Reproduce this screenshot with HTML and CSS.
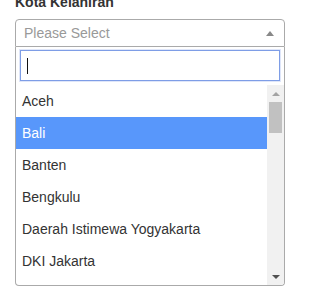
FILE: index.html
```html
<!DOCTYPE html>
<html>
<head>
<meta charset="utf-8">
<link rel="stylesheet" href="styles.css">
</head>
<body>
<div class="field">
  <label class="label">Kota Kelahiran</label>
  <div class="select">
    <span class="placeholder">Please Select</span>
    <span class="arrow"></span>
  </div>
  <div class="dropdown">
    <div class="search">
      <div class="search-input"><span class="caret"></span></div>
    </div>
    <div class="results">
      <ul class="options">
        <li class="option">Aceh</li>
        <li class="option active">Bali</li>
        <li class="option">Banten</li>
        <li class="option">Bengkulu</li>
        <li class="option">Daerah Istimewa Yogyakarta</li>
        <li class="option">DKI Jakarta</li>
      </ul>
      <div class="scrollbar">
        <div class="sb-btn"><span class="sb-up"></span></div>
        <div class="sb-thumb"></div>
        <div class="sb-track"></div>
        <div class="sb-btn"><span class="sb-down"></span></div>
      </div>
    </div>
  </div>
</div>
</body>
</html>
```
FILE: styles.css
```css
html, body {
  margin: 0;
  padding: 0;
  background: #fff;
}
body {
  font-family: "Liberation Sans", Arial, sans-serif;
  font-size: 14px;
  color: #333;
}
.field {
  margin: 0 0 0 15px;
  width: 270px;
}
.label {
  display: block;
  font-weight: bold;
  line-height: 20px;
  margin-top: -8px;
  margin-bottom: 7px;
}
.select {
  box-sizing: border-box;
  height: 28px;
  border: 1px solid #aaa;
  border-radius: 4px 4px 0 0;
  display: flex;
  align-items: center;
  justify-content: space-between;
  padding: 0 8px 0 8px;
  background: #fff;
}
.placeholder {
  color: #999;
  line-height: 26px;
  font-size: 14px;
}
.arrow {
  width: 0;
  height: 0;
  border-style: solid;
  border-width: 0 4px 5px 4px;
  border-color: transparent transparent #888 transparent;
  margin-right: 2px;
}
.dropdown {
  box-sizing: border-box;
  border: 1px solid #aaa;
  border-top: none;
  border-radius: 0 0 4px 4px;
  background: #fff;
  overflow: hidden;
}
.search {
  padding: 4px;
}
.search-input {
  box-sizing: border-box;
  height: 31px;
  border: 1px solid #7e9de6;
  box-shadow: 0 0 0 1px rgba(126,157,230,0.25);
  display: flex;
  align-items: center;
  padding-left: 6px;
  margin-top: -1px;
}
.caret {
  display: block;
  width: 1px;
  height: 16px;
  background: #111;
}
.results {
  display: flex;
  height: 200px;
}
.options {
  list-style: none;
  margin: 0;
  padding: 0;
  flex: 1;
  overflow: hidden;
}
.option {
  padding: 6px;
  line-height: 20px;
  color: #333;
}
.option.active {
  background: #5897fb;
  color: #fff;
}
.scrollbar {
  width: 17px;
  background: #f1f1f1;
  display: flex;
  flex-direction: column;
}
.sb-btn {
  height: 17px;
  display: flex;
  align-items: center;
  justify-content: center;
}
.sb-up {
  width: 0;
  height: 0;
  border-style: solid;
  border-width: 0 4px 4px 4px;
  border-color: transparent transparent #a3a3a3 transparent;
}
.sb-down {
  width: 0;
  height: 0;
  border-style: solid;
  border-width: 4px 4px 0 4px;
  border-color: #505050 transparent transparent transparent;
}
.sb-thumb {
  height: 31px;
  margin: 0 2px;
  background: #c1c1c1;
}
.sb-track {
  flex: 1;
}
```
